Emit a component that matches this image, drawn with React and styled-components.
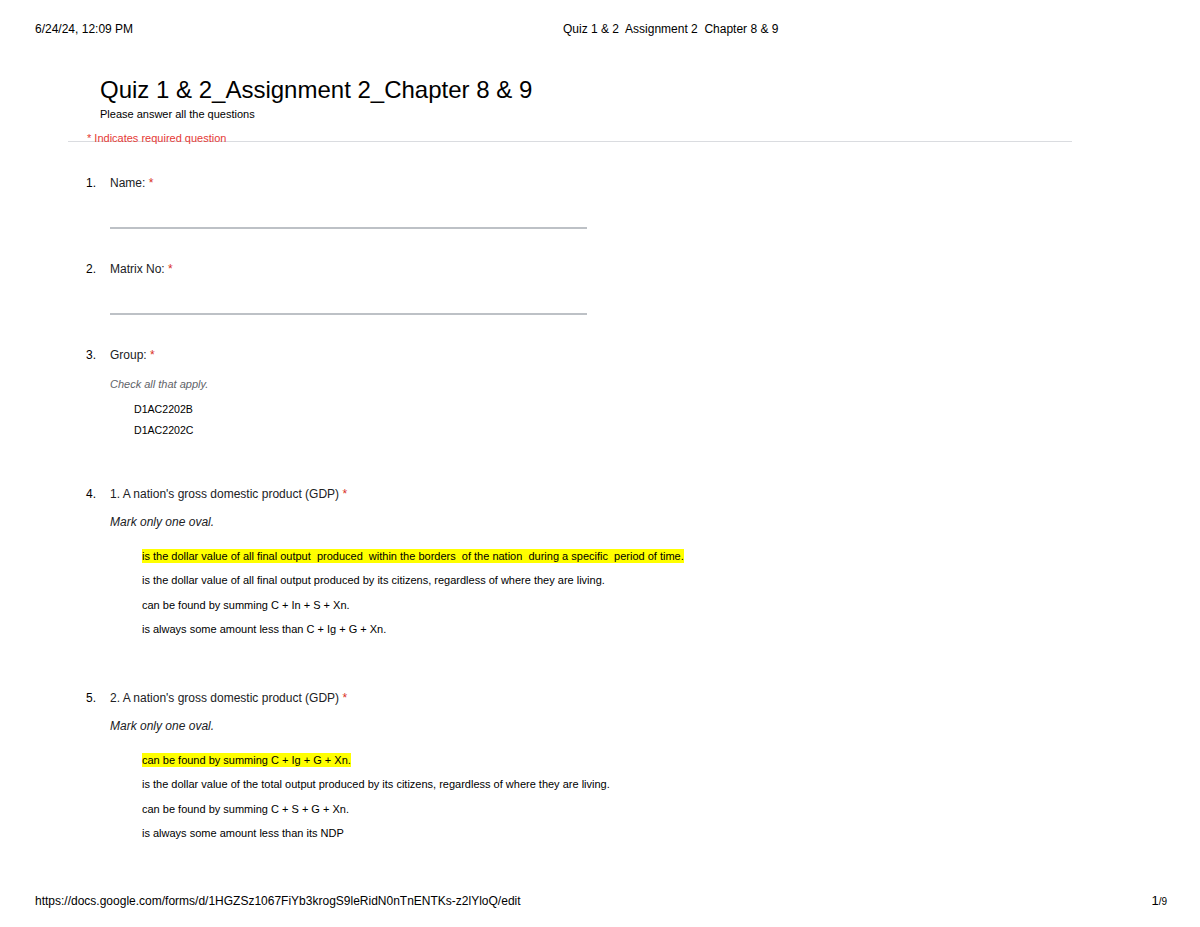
import React from 'react'
import styled, { createGlobalStyle } from 'styled-components'

const GlobalStyle = createGlobalStyle`
  body {
    margin: 0;
    background: #ffffff;
    font-family: "Liberation Sans", Arial, sans-serif;
    color: #202124;
  }
`

const questions = [
  {
    label: 'Name:',
    type: 'text',
  },
  {
    label: 'Matrix No:',
    type: 'text',
  },
  {
    label: 'Group:',
    type: 'check',
    hint: 'Check all that apply.',
    options: ['D1AC2202B', 'D1AC2202C'],
  },
  {
    label: "1. A nation's gross domestic product (GDP)",
    type: 'oval',
    hint: 'Mark only one oval.',
    options: [
      'is the dollar value of all final output  produced  within the borders  of the nation  during a specific  period of time.',
      'is the dollar value of all final output produced by its citizens, regardless of where they are living.',
      'can be found by summing C + In + S + Xn.',
      'is always some amount less than C + Ig + G + Xn.',
    ],
    marked: 0,
  },
  {
    label: "2. A nation's gross domestic product (GDP)",
    type: 'oval',
    hint: 'Mark only one oval.',
    options: [
      'can be found by summing C + Ig + G + Xn.',
      'is the dollar value of the total output produced by its citizens, regardless of where they are living.',
      'can be found by summing C + S + G + Xn.',
      'is always some amount less than its NDP',
    ],
    marked: 0,
  },
]

const App = () => {
  return (
    <Page>
      <GlobalStyle />
      <PrintHeader>
        <span>6/24/24, 12:09 PM</span>
        <span>Quiz 1 &amp; 2  Assignment 2  Chapter 8 &amp; 9</span>
      </PrintHeader>

      <Form>
        <FormTitle>Quiz 1 &amp; 2_Assignment 2_Chapter 8 &amp; 9</FormTitle>
        <FormDescription>Please answer all the questions</FormDescription>
        <RequiredNote>* Indicates required question</RequiredNote>
        <Divider />

        <QuestionList>
          {questions.map((q, i) => (
            <Question key={i} $type={q.type}>
              <Number>{i + 1}.</Number>
              <Body>
                <Label>
                  {q.label} <Star>*</Star>
                </Label>
                {q.type === 'text' && <AnswerLine />}
                {q.hint && <Hint $type={q.type}>{q.hint}</Hint>}
                {q.type === 'check' && (
                  <CheckList>
                    {q.options.map((o) => (
                      <CheckOption key={o}>{o}</CheckOption>
                    ))}
                  </CheckList>
                )}
                {q.type === 'oval' && (
                  <OvalList>
                    {q.options.map((o, j) => (
                      <OvalOption key={j}>
                        <OptionText $marked={q.marked === j}>{o}</OptionText>
                      </OvalOption>
                    ))}
                  </OvalList>
                )}
              </Body>
            </Question>
          ))}
        </QuestionList>
      </Form>

      <PrintFooter>
        <span>https://docs.google.com/forms/d/1HGZSz1067FiYb3krogS9leRidN0nTnENTKs-z2lYloQ/edit</span>
        <PageCount>
          1<small>/9</small>
        </PageCount>
      </PrintFooter>
    </Page>
  )
}

const Page = styled.div`
  min-height: 927px;
  display: flex;
  flex-direction: column;
`

const PrintHeader = styled.header`
  display: grid;
  grid-template-columns: 528px auto;
  padding: 22px 35px 0;
  font-size: 12px;
  line-height: 14px;
  color: #000;
  white-space: pre;
`

const Form = styled.main`
  margin: 40px 128px 0 68px;
`

const FormTitle = styled.h1`
  margin: 0;
  padding-left: 32px;
  font-size: 24px;
  font-weight: normal;
  line-height: 28px;
  color: #000;
`

const FormDescription = styled.p`
  margin: 3px 0 0;
  padding-left: 32px;
  font-size: 11px;
  line-height: 14px;
  color: #000;
`

const RequiredNote = styled.p`
  margin: 10px 0 0;
  padding-left: 19px;
  font-size: 11px;
  line-height: 14px;
  color: #e53935;
`

const Divider = styled.hr`
  margin: -4px 0 0;
  border: none;
  border-top: 1px solid #dadce0;
`

const QuestionList = styled.div`
  display: flex;
  flex-direction: column;
  padding: 33px 0 0 18px;
`

const Question = styled.section`
  display: grid;
  grid-template-columns: 24px 1fr;
  margin-bottom: ${(p) => (p.$type === 'text' ? '32px' : p.$type === 'check' ? '45px' : '49px')};
`

const Number = styled.span`
  font-size: 12px;
  line-height: 16px;
  color: #000;
`

const Body = styled.div`
  display: flex;
  flex-direction: column;
`

const Label = styled.div`
  font-size: 12px;
  line-height: 16px;
  color: #202124;
`

const Star = styled.span`
  color: #d93025;
`

const AnswerLine = styled.div`
  width: 477px;
  height: 2px;
  margin-top: 36px;
  background: #bdc1c6;
`

const Hint = styled.div`
  margin-top: ${(p) => (p.$type === 'check' ? '13px' : '12px')};
  font-size: ${(p) => (p.$type === 'check' ? '11px' : '12px')};
  font-style: italic;
  line-height: 16px;
  color: ${(p) => (p.$type === 'check' ? '#5f6368' : '#202124')};
`

const CheckList = styled.div`
  display: flex;
  flex-direction: column;
  margin-top: 7px;
  padding-left: 24px;
`

const CheckOption = styled.div`
  font-size: 10.6px;
  line-height: 21px;
  color: #000;
`

const OvalList = styled.div`
  display: flex;
  flex-direction: column;
  margin-top: 14px;
  padding-left: 32px;
`

const OvalOption = styled.div`
  height: 24.3px;
  font-size: 11px;
  line-height: 24px;
  color: #000;
  white-space: pre;
`

const OptionText = styled.span`
  background: ${(p) => (p.$marked ? '#ffff00' : 'transparent')};
  padding: 1px 0;
`

const PrintFooter = styled.footer`
  display: flex;
  justify-content: space-between;
  align-items: baseline;
  margin-top: auto;
  padding: 0 33px 20px 35px;
  font-size: 12px;
  line-height: 14px;
  color: #000;
`

const PageCount = styled.span`
  font-size: 13px;

  small {
    font-size: 10px;
  }
`

export default App
